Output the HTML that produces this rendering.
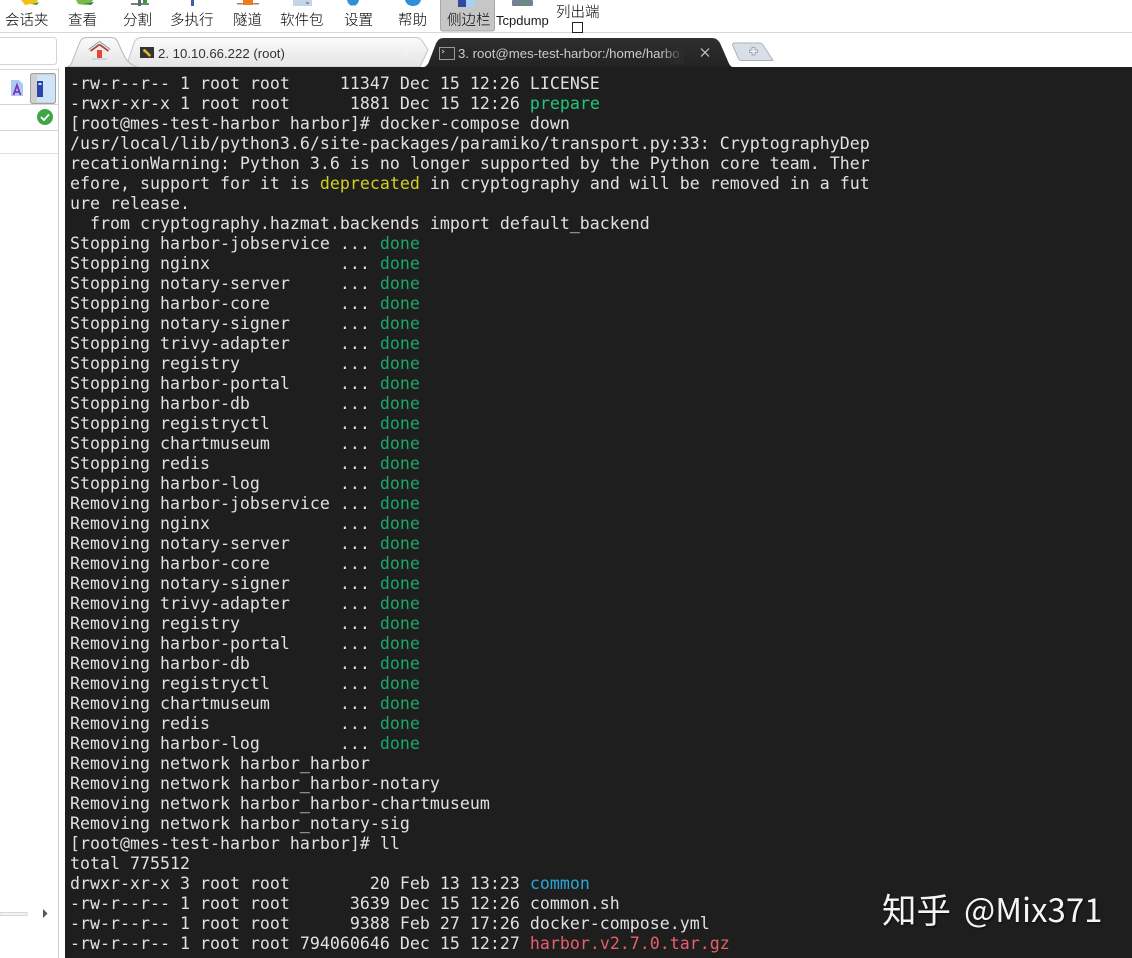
<!DOCTYPE html>
<html><head><meta charset="utf-8">
<style>
html,body{margin:0;padding:0;background:#fff;}
#root{position:relative;width:1132px;height:958px;overflow:hidden;background:#fff;font-family:"Liberation Sans","WenQuanYi Zen Hei","Noto Sans CJK SC",sans-serif;}
.a{position:absolute;}
.tb{position:absolute;top:11px;font-size:14.5px;line-height:18px;color:#000;white-space:nowrap;font-family:"Noto Sans CJK SC","WenQuanYi Zen Hei",sans-serif;font-weight:300;}
#term{position:absolute;left:65px;top:67px;width:1067px;height:891px;background:#1e1e1e;}
#t{position:absolute;left:70px;top:74px;margin:0;font-family:"DejaVu Sans Mono",monospace;font-size:16.6px;line-height:20px;color:#e0e0e0;white-space:pre;letter-spacing:0.006px;}
.g{color:#19a868;}.p{color:#1fc77c;}.y{color:#d0d020;}.b{color:#2aa5d8;}.r{color:#e5606a;}
</style></head><body>
<div id="root">
<!-- toolbar icons -->
<svg class="a" style="left:0;top:0" width="1132" height="34">
<path d="M21 0h17l-3 5-5-1-5 1z" fill="#f2c21a"/><path d="M32 4l7-2-2 3z" fill="#3a9a3a"/>
<path d="M76 0h17l-2 4-6 1-7-1z" fill="#7cb84a"/><path d="M84 4l10-2-3 3z" fill="#2e7d32"/>
<path d="M131 3h18v2h-18z" fill="#6b8a6b"/><rect x="138" y="0" width="3" height="6" fill="#5a6b7a"/><rect x="143" y="0" width="4" height="3" fill="#3a9a3a"/>
<rect x="191" y="0" width="3" height="6" fill="#3f5fa8"/>
<path d="M237 3h22v1.500h-22z" fill="#b0805a"/><rect x="243" y="0" width="10" height="5" fill="#ee7d22"/>
<rect x="293" y="0" width="19" height="6" fill="#c4d4e4"/><rect x="306" y="2" width="3" height="2" fill="#7a98b4"/>
<path d="M347 0h12l-1 3-2.500 2.500h-5l-2.500-2.500z" fill="#2f8fd8"/>
<path d="M405 0h16c-1 4-4 6-8 6s-7-2-8-6z" fill="#2f8fd8"/>
<rect x="440.500" y="-2" width="54" height="33" rx="2" fill="#c6c6c6" stroke="#a8a8a8"/>
<rect x="458" y="0" width="8" height="7" fill="#2d4aa0"/><rect x="466" y="0" width="9" height="7" fill="#a9d0f5"/>
<rect x="512" y="0" width="21" height="6" rx="1" fill="#6f8490"/><rect x="520" y="3" width="8" height="2" fill="#5d9a6a"/>
<line x1="0" y1="32.500" x2="1132" y2="32.500" stroke="#d8d8d8"/>
</svg>
<div class="tb" style="left:5px">会话夹</div>
<div class="tb" style="left:68px">查看</div>
<div class="tb" style="left:123px">分割</div>
<div class="tb" style="left:170px">多执行</div>
<div class="tb" style="left:233px">隧道</div>
<div class="tb" style="left:280px">软件包</div>
<div class="tb" style="left:344px">设置</div>
<div class="tb" style="left:398px">帮助</div>
<div class="tb" style="left:447px">侧边栏</div>
<div class="a" style="left:496px;top:13px;font-size:13px;line-height:16px;color:#1a1a1a">Tcpdump</div>
<div class="tb" style="left:556px;top:3px">列出端</div>
<div class="a" style="left:572px;top:22px;width:9px;height:9px;border:1px solid #222"></div>

<!-- tab strip -->
<svg class="a" style="left:0;top:33px" width="1132" height="36">
<defs>
<linearGradient id="tg" x1="0" y1="0" x2="0" y2="1"><stop offset="0" stop-color="#fbfbfb"/><stop offset="1" stop-color="#e4e4e4"/></linearGradient>
<linearGradient id="dg" x1="0" y1="0" x2="0" y2="1"><stop offset="0" stop-color="#2f2f2f"/><stop offset="1" stop-color="#222"/></linearGradient>
</defs>
<path d="M-2 4.500H53c3 0 3.500 1.500 3.500 3.500v20c0 3-1 3.500-3.500 3.500H-2z" fill="#fff" stroke="#d4d4d4"/>
<path d="M133 34l-5-6 6-18c1.500-4 4-5.500 8-5.500H415c4 0 6 1.500 8 4.500l5 8-8 17z" fill="url(#tg)" stroke="#c4c4c4"/>
<path d="M67 34c3-1 4-2 5-5l7-18c2-5 4-6.500 8-6.500h24c4 0 5.500 1.500 7 5l5 11c3 7 8 12 15 13.500z" fill="url(#tg)" stroke="#b8b8b8"/>
<path d="M423 34.500c3-1 5-3 6-6l7-18c2-4 4-5.500 8-5.500h268c4 0 6 2 8 5l7 16c2 5 3 7 6 8.500z" fill="url(#dg)"/>
<path d="M732.500 12c0-1.500 1-2 2.500-2h24c2 0 3 .5 4 2l10 15.500H742c-2 0-3-.5-3.500-2z" fill="#d8dfe7" stroke="#a9b3be"/>
<path d="M751 17h1v-2.500h3V17h2.500v2.500H755V22h-3v-2.500h-2.500V17z" fill="#eef1f4" stroke="#8d959e" stroke-width=".8"/>
<path d="M99.500 11.500l-9 6.500M99.500 11.500l9 6.500" fill="none" stroke="#b04444" stroke-width="1.800"/>
<path d="M99.500 8.500l11 8M99.500 8.500l-11 8" fill="none" stroke="#7d9a7d" stroke-width=".8"/>
<path d="M93 18.500l6.500-5 6.500 5V25H93z" fill="#f2ece0"/><rect x="97" y="17" width="5" height="8.500" fill="#e0463a"/>
<rect x="92" y="25" width="15" height="2" fill="#cfd6de"/>
<rect x="140" y="14" width="14" height="11" fill="#333"/><path d="M143 16.500l2-.5 1.500 1.500 4.500 4.500-1.500 2-4.500-4.500-1.500-.5z" fill="#e8b530"/>
<rect x="439.500" y="14.500" width="15" height="12" fill="#2b2b2b" stroke="#999"/><path d="M442 17l2 1.500-2 1.500" fill="none" stroke="#bbb" stroke-width=".8"/>
<path d="M701 15.500l8 8m0-8l-8 8" stroke="#ccc" stroke-width="1.200"/>
<path d="M401 16l8 8m0-8l-8 8" stroke="#f5f5f5" stroke-width="1.200"/>
</svg>
<div class="a" style="left:158px;top:46px;font-size:13.2px;line-height:16px;color:#333;white-space:nowrap">2. 10.10.66.222 (root)</div>
<div class="a" style="left:458px;top:46px;width:226px;font-size:13.2px;line-height:16px;color:#ccc;white-space:nowrap;overflow:hidden">3. root@mes-test-harbor:/home/harbo</div>
<div class="a" style="left:660px;top:44px;width:24px;height:20px;background:linear-gradient(90deg,rgba(43,43,43,0),#2b2b2b)"></div>

<!-- left sidebar -->
<svg class="a" style="left:0;top:68px" width="65" height="890">
<rect x="58" y="0" width="1" height="890" fill="#cfcfcf"/>
<line x1="0" y1="1.500" x2="58" y2="1.500" stroke="#d8d8d8"/>
<line x1="0" y1="36.500" x2="58" y2="36.500" stroke="#d4d4d4"/>
<line x1="0" y1="62.500" x2="58" y2="62.500" stroke="#d4d4d4"/>
<line x1="0" y1="85.500" x2="58" y2="85.500" stroke="#e0e0e0"/>
<path d="M11 12h8l4 4v12H11z" fill="#a9cdf0"/>
<path d="M13.500 27l3.500-10 3.500 10M14.500 24h5" fill="none" stroke="#8a2fc0" stroke-width="1.800"/>
<rect x="30.500" y="5.500" width="25" height="30" rx="2" fill="#cfcfcf" stroke="#a0a0a0"/>
<rect x="37" y="7" width="18" height="27" fill="#cfe4f7"/>
<rect x="37" y="13" width="6" height="16" fill="#2c46a8"/><rect x="38.500" y="15" width="3" height="2" fill="#cfe4f7"/>
<circle cx="45" cy="49" r="8" fill="#3fa648"/>
<path d="M41 49l3 3 5-5.500" fill="none" stroke="#fff" stroke-width="1.800"/>
<rect x="0" y="844.500" width="27" height="3" fill="#f4f4f4" stroke="#d8d8d8" stroke-width="1"/>
<path d="M43 841l4.500 4.500-4.500 4.500z" fill="#555"/>
</svg>

<div id="term"></div>
<pre id="t">-rw-r--r-- 1 root root     11347 Dec 15 12:26 LICENSE
-rwxr-xr-x 1 root root      1881 Dec 15 12:26 <span class="p">prepare</span>
[root@mes-test-harbor harbor]# docker-compose down
/usr/local/lib/python3.6/site-packages/paramiko/transport.py:33: CryptographyDep
recationWarning: Python 3.6 is no longer supported by the Python core team. Ther
efore, support for it is <span class="y">deprecated</span> in cryptography and will be removed in a fut
ure release.
  from cryptography.hazmat.backends import default_backend
Stopping harbor-jobservice ... <span class="g">done</span>
Stopping nginx             ... <span class="g">done</span>
Stopping notary-server     ... <span class="g">done</span>
Stopping harbor-core       ... <span class="g">done</span>
Stopping notary-signer     ... <span class="g">done</span>
Stopping trivy-adapter     ... <span class="g">done</span>
Stopping registry          ... <span class="g">done</span>
Stopping harbor-portal     ... <span class="g">done</span>
Stopping harbor-db         ... <span class="g">done</span>
Stopping registryctl       ... <span class="g">done</span>
Stopping chartmuseum       ... <span class="g">done</span>
Stopping redis             ... <span class="g">done</span>
Stopping harbor-log        ... <span class="g">done</span>
Removing harbor-jobservice ... <span class="g">done</span>
Removing nginx             ... <span class="g">done</span>
Removing notary-server     ... <span class="g">done</span>
Removing harbor-core       ... <span class="g">done</span>
Removing notary-signer     ... <span class="g">done</span>
Removing trivy-adapter     ... <span class="g">done</span>
Removing registry          ... <span class="g">done</span>
Removing harbor-portal     ... <span class="g">done</span>
Removing harbor-db         ... <span class="g">done</span>
Removing registryctl       ... <span class="g">done</span>
Removing chartmuseum       ... <span class="g">done</span>
Removing redis             ... <span class="g">done</span>
Removing harbor-log        ... <span class="g">done</span>
Removing network harbor_harbor
Removing network harbor_harbor-notary
Removing network harbor_harbor-chartmuseum
Removing network harbor_notary-sig
[root@mes-test-harbor harbor]# ll
total 775512
drwxr-xr-x 3 root root        20 Feb 13 13:23 <span class="b">common</span>
-rw-r--r-- 1 root root      3639 Dec 15 12:26 common.sh
-rw-r--r-- 1 root root      9388 Feb 27 17:26 docker-compose.yml
-rw-r--r-- 1 root root 794060646 Dec 15 12:27 <span class="r">harbor.v2.7.0.tar.gz</span></pre>
<div class="a" style="left:882px;top:886px;font-family:'Noto Sans CJK SC',sans-serif;font-size:34.5px;line-height:44px;color:#f4f4f4;white-space:nowrap;text-shadow:1px 1px 2px rgba(0,0,0,.6)">知乎</div>
<div class="a" style="left:964px;top:886px;font-family:'Noto Sans CJK SC',sans-serif;font-size:33px;line-height:44px;color:#f4f4f4;white-space:nowrap;text-shadow:1px 1px 2px rgba(0,0,0,.6)">@Mix371</div>
</div>
</body></html>
